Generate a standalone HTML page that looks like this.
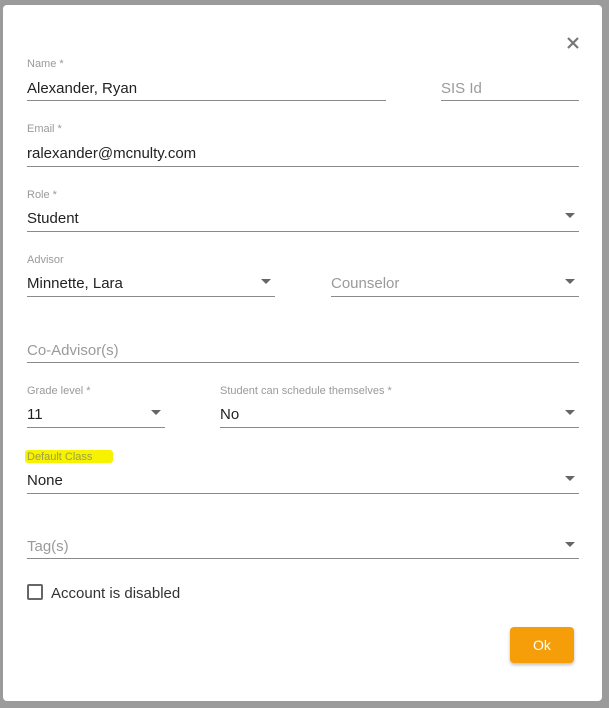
<!DOCTYPE html>
<html><head><style>
body{margin:0;width:609px;height:708px;background:#9b9b9b;position:relative;overflow:hidden;font-family:"Liberation Sans",sans-serif}
.dlg{position:absolute;left:3px;top:5px;width:599px;height:696px;background:#fff;border-radius:4px}
.a{position:absolute;white-space:nowrap}
.lb{font-size:11px;color:#9a9a9a;margin-top:1px}
.v{font-size:15px;color:#222;margin-top:2px}
.ph{font-size:15px;color:#9a9a9a;margin-top:2px}
.ln{position:absolute;height:1px;background:#8a8a8a}
.ar{position:absolute;width:0;height:0;border-left:5px solid transparent;border-right:5px solid transparent;border-top:5px solid #666}
</style></head><body>
<div class="dlg"></div>
<svg class="a" style="left:567px;top:37px" width="12" height="12"><path d="M1 1L11 11M11 1L1 11" stroke="#777" stroke-width="2.2"/></svg>

<div class="a lb" style="left:27px;top:57px">Name *</div>
<div class="a v" style="left:27px;top:78px">Alexander, Ryan</div>
<div class="ln" style="left:27px;top:100px;width:359px"></div>
<div class="a ph" style="left:441px;top:78px">SIS Id</div>
<div class="ln" style="left:441px;top:100px;width:138px"></div>

<div class="a lb" style="left:27px;top:122px">Email *</div>
<div class="a v" style="left:27px;top:143px">ralexander@mcnulty.com</div>
<div class="ln" style="left:27px;top:166px;width:552px"></div>

<div class="a lb" style="left:27px;top:188px">Role *</div>
<div class="a v" style="left:27px;top:208px">Student</div>
<div class="ar" style="left:565px;top:213px"></div>
<div class="ln" style="left:27px;top:231px;width:552px"></div>

<div class="a lb" style="left:27px;top:253px">Advisor</div>
<div class="a v" style="left:27px;top:273px">Minnette, Lara</div>
<div class="ar" style="left:261px;top:279px"></div>
<div class="ln" style="left:27px;top:296px;width:248px"></div>
<div class="a ph" style="left:331px;top:273px">Counselor</div>
<div class="ar" style="left:565px;top:279px"></div>
<div class="ln" style="left:331px;top:296px;width:248px"></div>

<div class="a ph" style="left:27px;top:340px">Co-Advisor(s)</div>
<div class="ln" style="left:27px;top:362px;width:552px"></div>

<div class="a lb" style="left:27px;top:384px">Grade level *</div>
<div class="a v" style="left:27px;top:404px">11</div>
<div class="ar" style="left:151px;top:410px"></div>
<div class="ln" style="left:27px;top:427px;width:138px"></div>
<div class="a lb" style="left:220px;top:384px">Student can schedule themselves *</div>
<div class="a v" style="left:220px;top:404px">No</div>
<div class="ar" style="left:565px;top:410px"></div>
<div class="ln" style="left:220px;top:427px;width:359px"></div>

<div class="a" style="left:25px;top:450px;width:88px;height:13px;background:#f7f200;border-radius:3px"></div>
<div class="a lb" style="left:27px;top:450px;color:#9aa04a">Default Class</div>
<div class="a v" style="left:27px;top:470px">None</div>
<div class="ar" style="left:565px;top:476px"></div>
<div class="ln" style="left:27px;top:493px;width:552px"></div>

<div class="a ph" style="left:27px;top:536px">Tag(s)</div>
<div class="ar" style="left:565px;top:542px"></div>
<div class="ln" style="left:27px;top:558px;width:552px"></div>

<div class="a" style="left:27px;top:584px;width:12px;height:12px;border:2px solid #666;border-radius:2px"></div>
<div class="a v" style="left:51px;top:583px;color:#333">Account is disabled</div>

<div class="a" style="left:510px;top:627px;width:64px;height:36px;background:#f59e0a;border-radius:4px;box-shadow:0 2px 3px rgba(0,0,0,.25);color:#fff;font-size:14px;text-align:center;line-height:36px">Ok</div>
</body></html>
